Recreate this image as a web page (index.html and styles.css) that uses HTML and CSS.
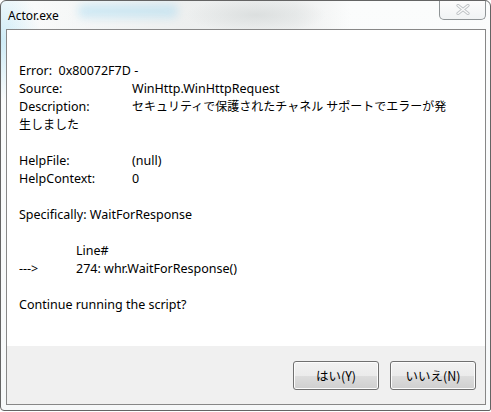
FILE: index.html
```html
<!DOCTYPE html>
<html lang="ja">
<head>
<meta charset="utf-8">
<title>Actor.exe</title>
<link rel="stylesheet" href="styles.css">
</head>
<body>
<div class="window">
  <div class="titlebar">
    <div class="glass"></div>
    <span class="title">Actor.exe</span>
    <button class="close" aria-label="閉じる">
      <svg width="16" height="11" viewBox="0 0 16 11">
        <path d="M3 1.5 L13 9.5 M13 1.5 L3 9.5" stroke="#bfc3c6" stroke-width="3.2" stroke-linecap="round" fill="none"/>
        <path d="M3 1.5 L13 9.5 M13 1.5 L3 9.5" stroke="#fbfbfb" stroke-width="1.4" stroke-linecap="round" fill="none"/>
      </svg>
    </button>
  </div>
  <div class="client">
    <div class="message">
      <div class="group">
        <div class="line">Error:&nbsp; 0x80072F7D -</div>
        <div class="line row"><span class="label">Source:</span><span>WinHttp.WinHttpRequest</span></div>
        <div class="line row"><span class="label">Description:</span><span class="jp">セキュリティで保護されたチャネル サポートでエラーが発</span></div>
        <div class="line jp">生しました</div>
      </div>
      <div class="group">
        <div class="line row"><span class="label">HelpFile:</span><span>(null)</span></div>
        <div class="line row"><span class="label">HelpContext:</span><span>0</span></div>
      </div>
      <div class="group">
        <div class="line">Specifically: WaitForResponse</div>
      </div>
      <div class="group">
        <div class="line row"><span class="arrow"></span><span>Line#</span></div>
        <div class="line row"><span class="arrow">---&gt;</span><span>274: whr.WaitForResponse()</span></div>
      </div>
      <div class="group">
        <div class="line">Continue running the script?</div>
      </div>
    </div>
    <div class="buttons">
      <button class="btn">はい(Y)</button>
      <button class="btn">いいえ(N)</button>
    </div>
  </div>
</div>
</body>
</html>
```

FILE: styles.css
```css
html, body {
  margin: 0;
  padding: 0;
  background: #ffffff;
}

.window {
  box-sizing: border-box;
  width: 491px;
  height: 411px;
  border: 1px solid #646464;
  border-radius: 6px 6px 2px 4px;
  background:
    radial-gradient(ellipse 40px 60px at 0px 40px, rgba(150, 215, 240, 0.45), rgba(150, 215, 240, 0) 100%),
    linear-gradient(#fbfcfc, #f6f8f9);
  padding: 0 4px 5px 5px;
  display: flex;
  flex-direction: column;
}

.titlebar {
  position: relative;
  height: 28px;
  display: flex;
  align-items: flex-start;
  overflow: hidden;
  background:
    radial-gradient(ellipse 70px 18px at 250px 14px, rgba(215, 219, 219, 0.8), rgba(230, 232, 232, 0) 100%),
    linear-gradient(90deg, rgba(255,255,255,0) 0, rgba(236,238,238,0.9) 180px, rgba(236,238,238,0.9) 290px, rgba(255,255,255,0) 345px);
}

.glass {
  position: absolute;
  left: 72px;
  top: 3px;
  width: 100px;
  height: 14px;
  border-radius: 6px;
  background: rgba(140, 210, 240, 0.35);
  filter: blur(4px);
}

.title {
  position: relative;
  font-family: "Noto Sans", "Liberation Sans", sans-serif;
  font-size: 12px;
  line-height: 16px;
  color: #000;
  padding: 7px 0 0 2px;
}

.close {
  position: relative;
  margin-left: auto;
  margin-top: -1px;
  width: 47px;
  height: 20px;
  padding: 0;
  border: 1px solid #8f9496;
  border-top: none;
  border-radius: 0 0 5px 5px;
  background: linear-gradient(#fdfdfd, #f1f3f4);
  display: flex;
  align-items: center;
  justify-content: center;
}

.client {
  flex: 1;
  border: 1px solid #878787;
  background: #ffffff;
  display: flex;
  flex-direction: column;
}

.message {
  flex: 1;
  padding: 32px 12px 0 12px;
  display: flex;
  flex-direction: column;
  gap: 18px;
  font-family: "Noto Sans", "Noto Sans CJK JP", sans-serif;
  font-size: 12.5px;
  color: #000;
}

.jp {
  font-size: 12px;
}

.line {
  height: 18px;
  line-height: 18px;
  white-space: nowrap;
}

.row {
  display: flex;
}

.label {
  width: 113px;
  flex: none;
}

.arrow {
  width: 57px;
  flex: none;
}

.buttons {
  height: 58px;
  box-sizing: border-box;
  background: #f0f0f0;
  display: flex;
  justify-content: flex-end;
  align-items: flex-start;
  gap: 11px;
  padding: 15px 9px 0 0;
}

.btn {
  width: 86px;
  height: 29px;
  border: 1px solid #707070;
  border-radius: 3px;
  box-shadow: inset 0 0 0 1px #fcfcfc;
  background: linear-gradient(#f2f2f2 0, #ebebeb 50%, #dddddd 51%, #cfcfcf 100%);
  font-family: "Noto Sans CJK JP", sans-serif;
  font-size: 12.5px;
  color: #000;
  padding: 0;
}
```
